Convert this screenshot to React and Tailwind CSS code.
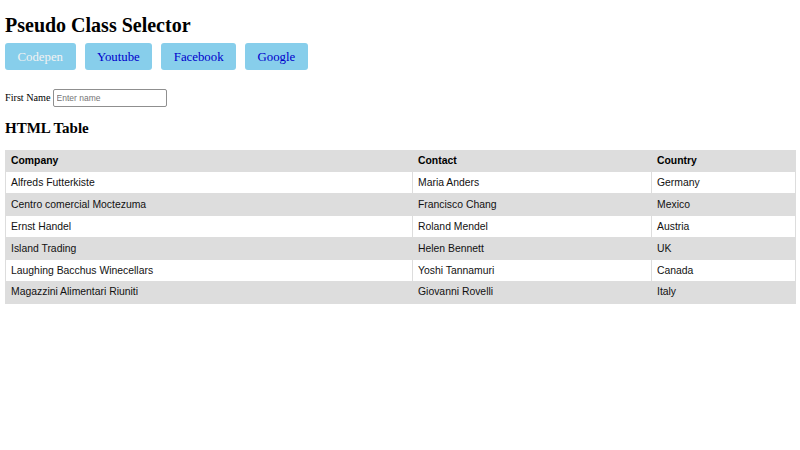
import React from 'react';

const links = ['Codepen', 'Youtube', 'Facebook', 'Google'];

const rows = [
  ['Alfreds Futterkiste', 'Maria Anders', 'Germany'],
  ['Centro comercial Moctezuma', 'Francisco Chang', 'Mexico'],
  ['Ernst Handel', 'Roland Mendel', 'Austria'],
  ['Island Trading', 'Helen Bennett', 'UK'],
  ['Laughing Bacchus Winecellars', 'Yoshi Tannamuri', 'Canada'],
  ['Magazzini Alimentari Riuniti', 'Giovanni Rovelli', 'Italy'],
];

export default function App() {
  return (
    <div className="min-h-screen bg-white p-[5px] text-black font-['Liberation_Serif',serif]">
      <h1 className="mt-[8.5px] text-[20px] font-bold leading-[23px]">Pseudo Class Selector</h1>

      <div className="mt-[6.5px] flex gap-[9px]">
        {links.map((name, i) => (
          <a
            key={name}
            href="#"
            className={
              'rounded-[3px] bg-[#87ceeb] px-[12.5px] pt-[7px] pb-[5.5px] text-[12.8px] leading-[14.5px] ' +
              (i === 0 ? 'text-[#f2f2f2]' : 'text-[#0000cc]')
            }
          >
            {name}
          </a>
        ))}
      </div>

      <form className="mt-[19px] flex items-center gap-[2px]">
        <label className="text-[10.2px] leading-[11.5px]">First Name</label>
        <input
          type="text"
          placeholder="Enter name"
          className="h-[18px] w-[114px] rounded-[2px] border border-[#8f8f8f] px-[3px] text-[8.5px] font-['Liberation_Sans',sans-serif] placeholder:text-[#757575]"
        />
      </form>

      <h2 className="mt-[12.5px] mb-[13px] text-[15px] font-bold leading-[17px]">HTML Table</h2>

      <table className="w-[790px] table-fixed border-collapse font-['Liberation_Sans',Arial,sans-serif] text-[10.4px] leading-[11.9px]">
        <colgroup>
          <col className="w-[407px]" />
          <col className="w-[239px]" />
          <col className="w-[144px]" />
        </colgroup>
        <thead>
          <tr className="bg-[#dddddd]">
            <th className="border border-[#dddddd] px-[5px] py-[4.5px] text-left font-bold">Company</th>
            <th className="border border-[#dddddd] px-[5px] py-[4.5px] text-left font-bold">Contact</th>
            <th className="border border-[#dddddd] px-[5px] py-[4.5px] text-left font-bold">Country</th>
          </tr>
        </thead>
        <tbody>
          {rows.map((r, i) => (
            <tr key={r[0]} className={i % 2 === 1 ? 'bg-[#dddddd]' : 'bg-white'}>
              {r.map((c) => (
                <td key={c} className="border border-[#dddddd] px-[5px] py-[4.5px] text-[#111]">
                  {c}
                </td>
              ))}
            </tr>
          ))}
        </tbody>
      </table>
    </div>
  );
}
